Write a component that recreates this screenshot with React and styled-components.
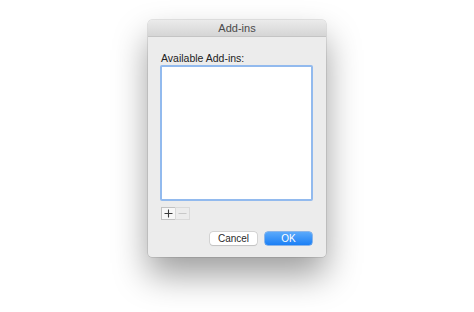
import styled, { createGlobalStyle } from "styled-components";

const GlobalStyle = createGlobalStyle`
  html, body {
    margin: 0;
    padding: 0;
    background: #ffffff;
    font-family: "Liberation Sans", Arial, sans-serif;
  }
`;

export default function App() {
  return (
    <>
      <GlobalStyle />
      <Page>
        <Dialog>
          <TitleBar>Add-ins</TitleBar>
          <Body>
            <Label>Available Add-ins:</Label>
            <ListBox />
            <SegmentRow>
              <Segment>
                <svg width="9" height="9" viewBox="0 0 9 9">
                  <path d="M4.5 0.5v8M0.5 4.5h8" stroke="#3a3a3a" strokeWidth="1.1" />
                </svg>
              </Segment>
              <Segment disabled>
                <svg width="9" height="9" viewBox="0 0 9 9">
                  <path d="M0.5 4.5h8" stroke="#c8c8c8" strokeWidth="1.1" />
                </svg>
              </Segment>
            </SegmentRow>
            <ButtonRow>
              <PushButton>Cancel</PushButton>
              <PushButton primary>OK</PushButton>
            </ButtonRow>
          </Body>
        </Dialog>
      </Page>
    </>
  );
}

const Page = styled.div`
  display: flex;
  justify-content: center;
  padding-top: 20px;
  height: 312px;
  box-sizing: border-box;
`;

const Dialog = styled.div`
  width: 178px;
  height: 237px;
  background: #ececec;
  border-radius: 4px;
  box-shadow: 0 0 0 0.5px rgba(0, 0, 0, 0.18), 0 18px 34px rgba(0, 0, 0, 0.38);
  display: flex;
  flex-direction: column;
  overflow: hidden;
`;

const TitleBar = styled.div`
  height: 17px;
  box-sizing: border-box;
  background: linear-gradient(#ebebeb, #d5d5d5);
  border-bottom: 1px solid #c4c4c4;
  text-align: center;
  font-size: 11px;
  line-height: 17px;
  color: #4a4a4a;
`;

const Body = styled.div`
  flex: 1;
  display: flex;
  flex-direction: column;
  padding: 15px 13px 12px 12px;
`;

const Label = styled.div`
  font-size: 10.5px;
  line-height: 12px;
  color: #222;
  padding-left: 1px;
  margin-bottom: 1px;
`;

const ListBox = styled.div`
  width: 153px;
  height: 136px;
  box-sizing: border-box;
  background: #fff;
  border: 2px solid #92baee;
  border-radius: 2px;
`;

const SegmentRow = styled.div`
  display: flex;
  margin-top: 6px;
  margin-left: 1px;
`;

const Segment = styled.div`
  width: 15px;
  height: 13px;
  box-sizing: border-box;
  display: flex;
  align-items: center;
  justify-content: center;
  background: ${(p) => (p.disabled ? "#ececec" : "#f7f7f7")};
  border: 1px solid ${(p) => (p.disabled ? "#dadada" : "#c2c2c2")};
  margin-left: ${(p) => (p.disabled ? "-1px" : "0")};
`;

const ButtonRow = styled.div`
  display: flex;
  justify-content: flex-end;
  gap: 8px;
  margin-top: auto;
  padding-right: 1px;
`;

const PushButton = styled.div`
  width: 47px;
  height: 13px;
  border-radius: 3px;
  font-size: 10px;
  line-height: 13px;
  text-align: center;
  color: ${(p) => (p.primary ? "#fff" : "#2a2a2a")};
  background: ${(p) =>
    p.primary ? "linear-gradient(#5aa9fb, #1b7ff5)" : "#fff"};
  box-shadow: ${(p) =>
    p.primary
      ? "0 0 0 0.5px #2a7fe6"
      : "0 0 0 0.5px #bdbdbd, 0 0.5px 1px rgba(0,0,0,0.15)"};
`;
